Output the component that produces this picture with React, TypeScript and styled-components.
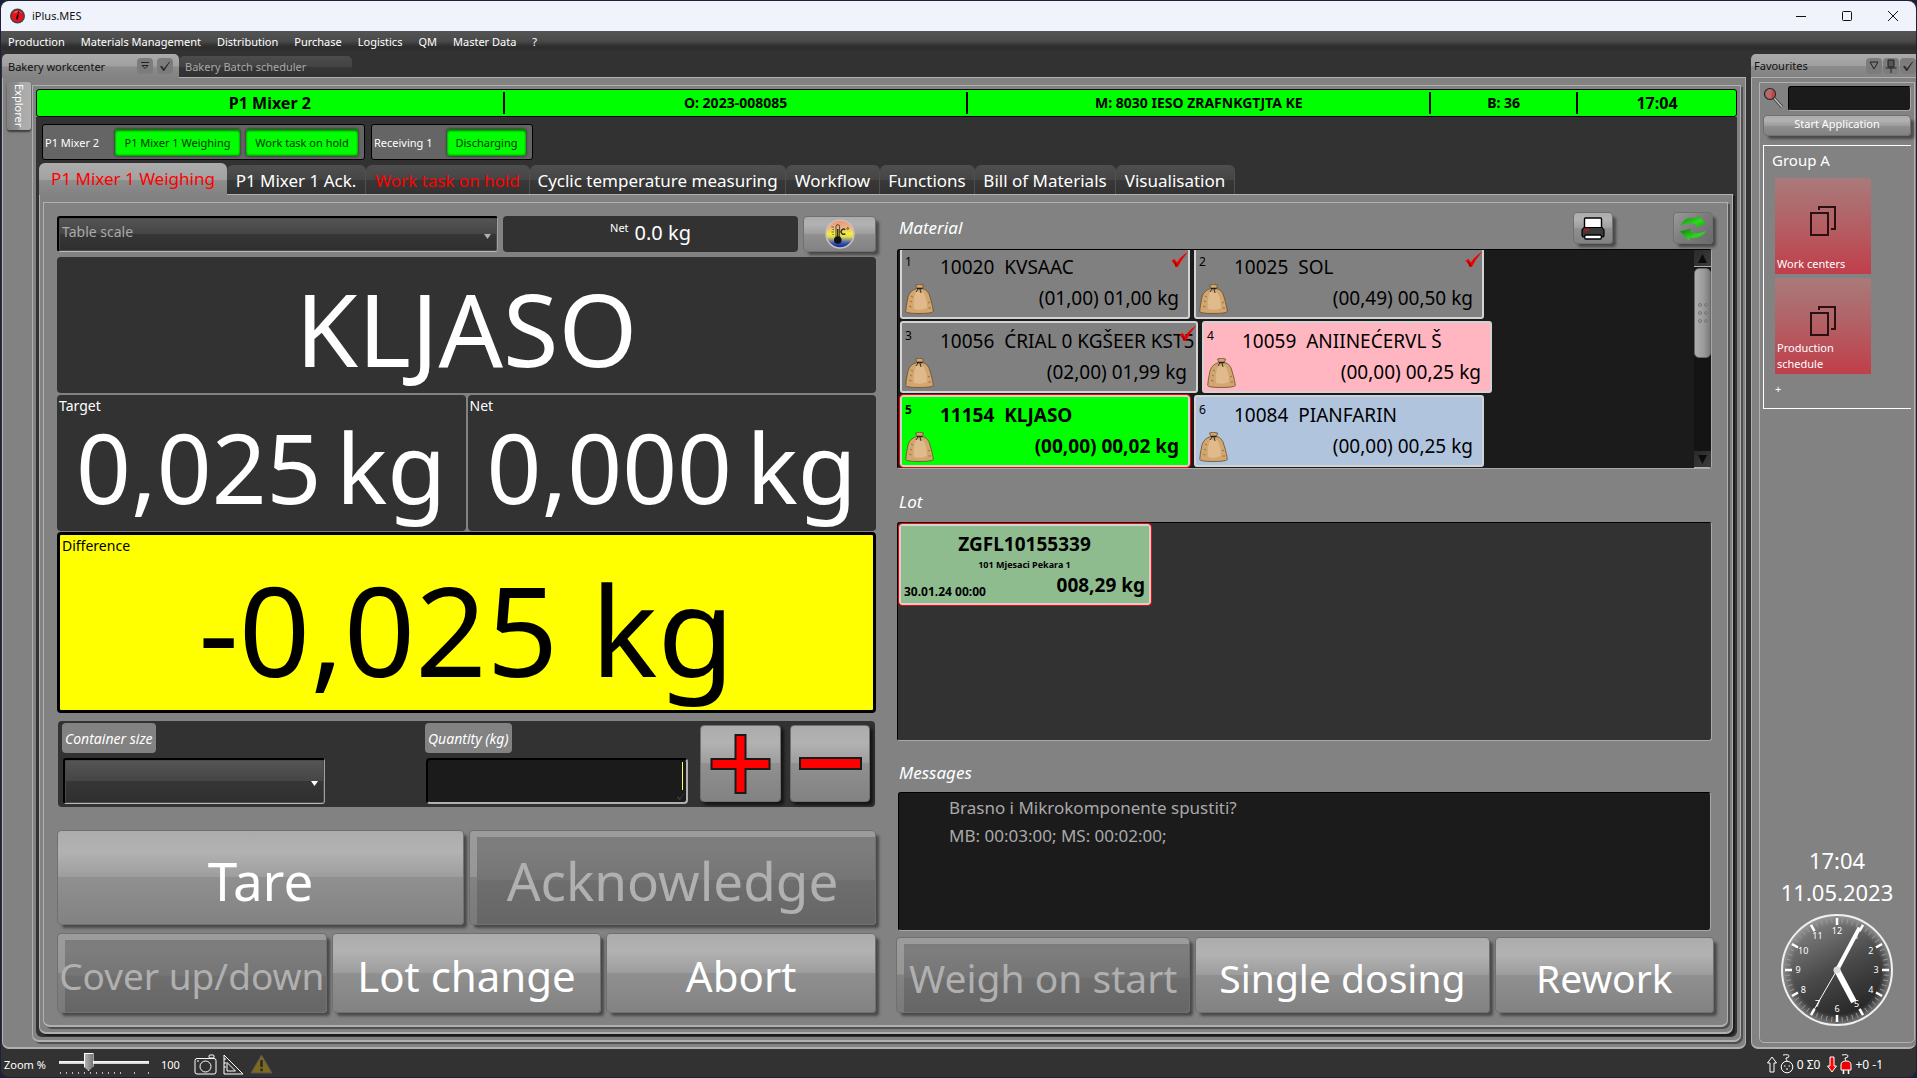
import React from "react";
import styled, { createGlobalStyle, css } from "styled-components";

const SILVER = "linear-gradient(#acacac 0%, #b2b2b2 22%, #9d9d9d 50%, #909090 50%, #828282 100%)";
const DARK_GLASS = "linear-gradient(#555555 0%, #454545 49%, #363636 50%, #2e2e2e 100%)";

const Global = createGlobalStyle`
  * { box-sizing: border-box; }
  body { margin: 0; background: #1c2138; }
  body, button, input, select {
    font-family: "Noto Sans", "Open Sans", sans-serif;
    color: #fff;
  }
  button, input, select { margin: 0; padding: 0; border: 0; border-radius: 0; }
  h2, p, ul { margin: 0; padding: 0; font-weight: 400; }
`;

/* ---------- window ---------- */

const Window = styled.div`
  display: flex;
  flex-direction: column;
  min-height: 100vh;
  padding: 1px;
  font-size: 11px;
`;

const TitleBar = styled.header`
  display: flex;
  align-items: center;
  gap: 6px;
  height: 30px;
  padding-left: 8px;
  background: #f0f3fb;
  color: #111;
  border-radius: 8px 8px 0 0;
`;

const TitleText = styled.span`
  flex: 1;
  font-size: 11px;
  line-height: 14px;
`;

const Caption = styled.div`
  display: flex;
`;

const CaptionButton = styled.button`
  display: grid;
  place-items: center;
  width: 46px;
  height: 28px;
  background: none;
`;

const MenuBar = styled.nav`
  display: flex;
  gap: 16px;
  height: 20px;
  padding: 2px 0 0 7px;
  align-items: center;
  background: linear-gradient(#545454 0%, #4a4a4a 50%, #2f2f2f 75%, #2c2c2c 90%, #323232 100%);
`;

const MenuItem = styled.button`
  background: none;
  font-size: 11px;
  line-height: 18px;
`;

const Body = styled.div`
  flex: 1;
  display: grid;
  grid-template-columns: minmax(0, 1fr) 165px;
  gap: 5px;
  padding: 3px 0 0 1px;
  background: #323232;
`;

const Column = styled.div`
  display: flex;
  flex-direction: column;
  min-width: 0;
`;

const DocTabs = styled.div`
  display: flex;
  align-items: flex-end;
  height: 23px;
`;

const DocTab = styled.div<{ $active?: boolean }>`
  display: flex;
  align-items: center;
  gap: 4px;
  width: ${(p) => (p.$active ? 177 : 173)}px;
  height: ${(p) => (p.$active ? 24 : 21)}px;
  margin-bottom: ${(p) => (p.$active ? -1 : 0)}px;
  padding: 0 6px;
  border-radius: 5px 5px 0 0;
  position: relative;
  z-index: ${(p) => (p.$active ? 1 : 0)};
  color: ${(p) => (p.$active ? "#111" : "#a9a9a9")};
  background: ${(p) =>
    p.$active
      ? "linear-gradient(#aaaaaa 0%, #a0a0a0 50%, #8c8c8c 54%, #828282 100%)"
      : "linear-gradient(#4c4c4c 0%, #434343 50%, #363636 54%, #323232 100%)"};
`;

const DocTabLabel = styled.span`
  flex: 1;
  white-space: nowrap;
`;

const TabButton = styled.button`
  display: grid;
  place-items: center;
  width: 16px;
  height: 16px;
  border-radius: 4px;
  background: #7c7c7c;
`;

const Pane = styled.section`
  flex: 1;
  display: flex;
  min-width: 0;
  border: 1px solid #b0b0b0;
  border-bottom-width: 2px;
  border-radius: 0 0 7px 7px;
  background: #828282;
`;

const Rail = styled.div`
  width: 29px;
  padding: 4px 0 0 4px;
`;

const RailTab = styled.button`
  width: 24px;
  height: 48px;
  writing-mode: vertical-rl;
  font-size: 11px;
  line-height: 18px;
  border-radius: 3px;
  background: linear-gradient(90deg, #828282 0%, #8e8e8e 45%, #a8a8a8 55%, #b0b0b0 100%);
  box-shadow: 0 2px 2px #3c3c3c;
`;

const Workcenter = styled.div`
  flex: 1;
  display: flex;
  flex-direction: column;
  min-width: 0;
  margin: 7px 4px 5px 0;
  padding: 3px;
  border: 1px solid #b0b0b0;
  border-bottom-width: 2px;
  border-radius: 0 0 7px 7px;
  box-shadow: 2px 2px 0 #505050;
`;

/* ---------- status strip ---------- */

const OrderBar = styled.div`
  display: grid;
  grid-template-columns: 468fr 464fr 463fr 147fr 158fr;
  height: 28px;
  padding: 2px 0;
  border: 1px solid #000;
  border-radius: 3px;
  background: #00ff00;
  color: #000;
`;

const OrderCell = styled.div<{ $large?: boolean }>`
  display: grid;
  place-items: center;
  min-width: 0;
  font-weight: 700;
  font-size: ${(p) => (p.$large ? 16 : 14)}px;
  line-height: 20px;
  white-space: nowrap;
  border-right: 2px solid #000;
  &:last-child { border-right: 0; }
`;

const Stage = styled.div`
  flex: 1;
  display: flex;
  flex-direction: column;
  padding: 0 4px 3px 3px;
  background: #323232;
  border-radius: 0 0 6px 6px;
`;

const Processes = styled.div`
  display: flex;
  gap: 6px;
  padding: 7px 3px 0;
  height: 46px;
`;

const Process = styled.div`
  display: flex;
  align-items: center;
  gap: 6px;
  height: 36px;
  padding: 0 6px 0 2px;
  border: 1px solid #000;
  border-radius: 3px;
  background: #656565;
`;

const ProcessName = styled.span<{ $width: number }>`
  width: ${(p) => p.$width}px;
  white-space: nowrap;
`;

const ProcessStep = styled.button<{ $width: number }>`
  width: ${(p) => p.$width}px;
  height: 27px;
  background: #00ff00;
  color: #003300;
  font-size: 11px;
  border-radius: 3px;
  box-shadow: inset 0 2px 2px #0a7a0a, inset 0 -1px 2px #0a8a0a, 0 0 2px 1px #444;
`;

const PageTabs = styled.div`
  display: flex;
  align-items: flex-end;
  height: 31px;
`;

const PageTab = styled.button<{ $active?: boolean; $alarm?: boolean; $width: number }>`
  flex: 0 1 ${(p) => p.$width}px;
  min-width: 0;
  height: ${(p) => (p.$active ? 32 : 29)}px;
  margin-bottom: ${(p) => (p.$active ? -1 : 0)}px;
  padding-top: ${(p) => (p.$active ? 0 : 2)}px;
  position: relative;
  z-index: ${(p) => (p.$active ? 1 : 0)};
  font-size: 17px;
  line-height: 24px;
  white-space: nowrap;
  color: ${(p) => (p.$alarm ? "#ff0000" : "#ffffff")};
  border-radius: 6px 6px 0 0;
  border-right: ${(p) => (p.$active ? "0" : "1px solid #505050")};
  background: ${(p) =>
    p.$active
      ? "linear-gradient(#acacac 0%, #a2a2a2 52%, #8e8e8e 54%, #828282 100%)"
      : "linear-gradient(#4f4f4f 0%, #454545 50%, #383838 52%, #323232 100%)"};
`;

const Page = styled.div`
  flex: 1;
  display: flex;
  border: 1px solid #b0b0b0;
  border-bottom-width: 2px;
  border-radius: 0 0 7px 7px;
  background: #828282;
  box-shadow: 2px 2px 0 #1c1c1c;
`;

const PageInner = styled.div`
  flex: 1;
  display: grid;
  grid-template-columns: minmax(0, 819fr) minmax(0, 818fr);
  gap: 20px;
  min-width: 0;
  margin: 7px 4px 5px 3px;
  padding: 13px 13px 12px 13px;
  border: 1px solid #b0b0b0;
  border-bottom-width: 2px;
  border-radius: 0 0 7px 7px;
  box-shadow: 2px 2px 0 #505050;
`;

/* ---------- weighing side ---------- */

const Weighing = styled.div`
  display: flex;
  flex-direction: column;
  min-width: 0;
`;

const ScaleRow = styled.div`
  display: grid;
  grid-template-columns: 441fr 295fr 73fr;
  gap: 5px;
  height: 36px;
  margin-bottom: 5px;
`;

const SelectBox = styled.div`
  position: relative;
  display: grid;
  svg {
    position: absolute;
    right: 7px;
    top: 50%;
    pointer-events: none;
  }
`;

const Select = styled.select`
  appearance: none;
  width: 100%;
  padding: 0 3px 7px;
  font-size: 14px;
  color: #a9a9a9;
  background: ${DARK_GLASS};
  border: 2px solid #000;
  border-right: 1px solid #a0a0a0;
  border-bottom: 1px solid #b8b8b8;
  border-radius: 3px;
  box-shadow: inset 0 0 0 1px #4a4a4a;
`;

const Readout = styled.div`
  display: flex;
  justify-content: center;
  gap: 6px;
  border-radius: 4px;
  background: #323232;
  font-size: 20px;
  line-height: 34px;
  small {
    font-size: 11px;
    line-height: 24px;
  }
`;

const glossy = css`
  background: ${SILVER};
  border: 1px solid #707070;
  border-radius: 4px;
  box-shadow: 4px 4px 3px -1px #484848;
`;

const IconButton = styled.button<{ $off?: boolean }>`
  display: grid;
  place-items: center;
  ${glossy}
  ${(p) => p.$off && "background: linear-gradient(135deg, #999 0%, #7c7c7c 50%, #6a6a6a 100%);"}
`;

const Names = styled.div`
  flex: 136 1 0;
  display: grid;
  place-items: end center;
  margin-bottom: 2px;
  border-radius: 4px;
  background: #323232;
  font-size: 101px;
  line-height: 130px;
`;

const Pair = styled.div`
  flex: 137 1 0;
  display: grid;
  grid-template-columns: 1fr 1fr;
  gap: 2px;
  margin-bottom: 1px;
`;

const Measure = styled.div`
  display: flex;
  flex-direction: column;
  padding: 0 2px;
  border-radius: 4px;
  background: #323232;
`;

const MeasureLabel = styled.span`
  font-size: 14px;
  line-height: 22px;
`;

const MeasureValue = styled.output`
  align-self: center;
  font-size: 96px;
  line-height: 100px;
  white-space: nowrap;
`;

const ThinSpace = styled.span`
  font-size: 56px;
  line-height: 1;
`;

const Difference = styled(Measure)`
  flex: 175 1 0;
  border: 3px solid #000;
  background: #ffff00;
  color: #000;
  padding: 0 2px;
  ${MeasureValue} {
    font-size: 125px;
    line-height: 144px;
  }
`;

const Container = styled.div`
  display: grid;
  grid-template-columns: 363fr 266fr 90fr 89fr;
  height: 86px;
  margin: 8px 1px 23px;
  padding: 2px 5px 3px 4px;
  border-radius: 4px;
  background: #323232;
`;

const Field = styled.div`
  display: flex;
  flex-direction: column;
  align-items: flex-start;
  gap: 5px;
`;

const FieldLabel = styled.label`
  height: 30px;
  padding: 0 3px;
  font-size: 14px;
  font-style: italic;
  line-height: 32px;
  border-radius: 4px;
  background: #828282;
`;

const FieldSelect = styled.div`
  width: 262px;
  height: 46px;
  display: grid;
  margin-left: 1px;
`;

const QuantityInput = styled.input`
  width: 262px;
  height: 46px;
  margin-left: 1px;
  padding: 0 12px;
  font-size: 20px;
  text-align: right;
  background: linear-gradient(#ffff66, #ffff66) right 3px top 2px / 1px 28px no-repeat, #1b1b1b;
  border: 2px solid #000;
  border-right-color: #b0b0b0;
  border-bottom-color: #b0b0b0;
  border-radius: 4px;
`;

const QuantityBox = styled.div`
  position: relative;
  svg {
    position: absolute;
    right: 3px;
    bottom: 3px;
  }
`;

const StepButton = styled.button`
  display: grid;
  place-items: center;
  margin: 2px 0 2px 9px;
  ${glossy}
  box-shadow: 3px 3px 3px #151515;
`;

const Actions = styled.div<{ $columns: string; $height: number; $gapTop?: number }>`
  display: grid;
  grid-template-columns: ${(p) => p.$columns};
  gap: 5px;
  height: ${(p) => p.$height}px;
  margin-top: ${(p) => p.$gapTop ?? 0}px;
`;

const ActionButton = styled.button<{ $size: number }>`
  min-width: 0;
  padding-top: 6px;
  font-size: ${(p) => p.$size}px;
  line-height: 64px;
  white-space: nowrap;
  display: flex;
  align-items: center;
  justify-content: center;
  ${glossy}
  &:disabled {
    color: #b0b0b0;
    background:
      linear-gradient(#7c7c7c 0%, #7e7e7e 10%, #757575 49%, #6e6e6e 50%, #666666 100%) right bottom / calc(100% - 7px) calc(100% - 6px) no-repeat,
      linear-gradient(#9c9c9c 0%, #969696 49%, #828282 50%, #7a7a7a 100%);
  }
`;

/* ---------- material side ---------- */

const Materials = styled.div`
  display: flex;
  flex-direction: column;
  min-width: 0;
`;

const SectionHead = styled.div`
  display: flex;
  align-items: center;
  gap: 60px;
  height: 53px;
  padding: 12px 1px 0 3px;
`;

const ListHead = styled(SectionHead)`
  height: 33px;
  padding-top: 0;
  align-items: flex-start;
`;

const MessageHead = styled(SectionHead)`
  height: 51px;
`;

const SectionTitle = styled.h2`
  flex: 1;
  font-size: 17px;
  font-style: italic;
  line-height: 24px;
`;

const HeadButton = styled(IconButton)`
  width: 40px;
  height: 32px;
  margin-top: -4px;
`;

const sunken = css`
  border: 1px solid #000;
  border-right-color: #a8a8a8;
  border-bottom-color: #a8a8a8;
  border-radius: 3px;
`;

const MaterialList = styled.div`
  display: flex;
  flex: 0 0 220px;
  margin: 0 2px 0 1px;
  background: #1b1b1b;
  overflow: hidden;
  ${sunken}
`;

const Cards = styled.div`
  flex: 1;
  display: flex;
  flex-direction: column;
  justify-content: flex-end;
  gap: 2px;
  min-width: 0;
  padding: 0 2px 1px;
`;

const CardRow = styled.div`
  display: flex;
  gap: 4px;
`;

const Card = styled.button<{ $tone: string; $selected?: boolean; $wide?: boolean }>`
  position: relative;
  display: flex;
  flex-direction: column;
  width: ${(p) => (p.$wide ? 298 : 290)}px;
  height: 72px;
  padding: 5px 9px 0 38px;
  border: 2px solid #d3d3d3;
  border-radius: 3px;
  background: ${(p) => p.$tone};
  color: #000;
  font-size: 19px;
  line-height: 26px;
  text-align: left;
  font-weight: ${(p) => (p.$selected ? 700 : 400)};
  outline: ${(p) => (p.$selected ? "1px solid #ff0000" : "none")};
  white-space: pre;
`;

const CardNumber = styled.span`
  position: absolute;
  left: 3px;
  top: 5px;
  font-size: 12px;
  line-height: 16px;
`;

const CardBag = styled.span`
  position: absolute;
  left: 3px;
  bottom: 3px;
  height: 30px;
`;

const CardCheck = styled.span`
  position: absolute;
  right: -1px;
  top: 2px;
  height: 16px;
  line-height: 0;
`;

const CardQuantity = styled.span`
  align-self: flex-end;
  margin-top: 5px;
`;

const ScrollTrack = styled.div`
  display: flex;
  flex-direction: column;
  width: 17px;
  background: #141414;
`;

const ScrollArrow = styled.button`
  display: grid;
  place-items: center;
  height: 17px;
  background: linear-gradient(135deg, #2a2a2a, #3c3c3c);
  border-bottom: 1px solid #b0b0b0;
`;

const ScrollThumb = styled.div`
  display: grid;
  place-items: center;
  height: 90px;
  margin: 1px 0 auto;
  border-radius: 5px;
  border: 1px solid #666;
  background: linear-gradient(90deg, #aeaeae, #9a9a9a 60%, #7a7a7a);
`;

const LotList = styled.div`
  flex: 216 1 0;
  margin: 0 2px 0 1px;
  background: #323232;
  padding: 1px;
  ${sunken}
`;

const LotCard = styled.button`
  display: grid;
  grid-template-columns: auto auto;
  align-content: start;
  justify-content: space-between;
  width: 252px;
  height: 81px;
  padding: 5px 4px 0 3px;
  border: 2px solid #d3d3d3;
  border-radius: 3px;
  outline: 1px solid #ff0000;
  background: #8fbc8f;
  color: #000;
  font-weight: 700;
`;

const LotCode = styled.span`
  grid-column: 1 / -1;
  font-size: 19px;
  line-height: 26px;
`;

const LotPlace = styled.span`
  grid-column: 1 / -1;
  font-size: 9px;
  line-height: 16px;
`;

const LotDate = styled.span`
  font-size: 12px;
  line-height: 10px;
  align-self: end;
`;

const LotQuantity = styled.span`
  font-size: 19px;
  line-height: 24px;
`;

const MessageList = styled.ul`
  flex: 136 1 0;
  margin: 0 3px 6px 2px;
  padding: 1px 0 0 50px;
  list-style: none;
  background: #1b1b1b;
  color: #a9a9a9;
  font-size: 17px;
  line-height: 28px;
  ${sunken}
`;

/* ---------- favourites ---------- */

const FavTab = styled.div`
  display: flex;
  align-items: center;
  gap: 1px;
  height: 23px;
  padding: 0 0 0 3px;
  border-radius: 5px 0 0 0;
  color: #111;
  background: linear-gradient(#aaaaaa 0%, #a0a0a0 50%, #8c8c8c 54%, #828282 100%);
`;

const FavPane = styled(Pane)`
  border-right: 0;
`;

const FavInner = styled.aside`
  flex: 1;
  display: flex;
  flex-direction: column;
  min-width: 0;
  margin: 4px 1px 4px 7px;
  padding: 3px;
  border: 1px solid #b0b0b0;
  border-radius: 0 0 5px 5px;
`;

const SearchRow = styled.label`
  display: flex;
  gap: 4px;
  height: 25px;
  margin-bottom: 4px;
`;

const SearchInput = styled.input`
  flex: 1;
  min-width: 0;
  background: #1b1b1b;
  ${sunken}
`;

const StartButton = styled.button`
  height: 21px;
  font-size: 11px;
  line-height: 14px;
  padding-bottom: 3px;
  ${glossy}
`;

const Group = styled.div`
  display: flex;
  flex-direction: column;
  align-items: flex-start;
  gap: 4px;
  height: 264px;
  margin-top: 9px;
  padding: 2px 0 0 11px;
  border: 1px solid #fff;
  border-right: 0;
`;

const GroupTitle = styled.h2`
  height: 26px;
  margin-left: -3px;
  font-size: 15px;
  line-height: 24px;
`;

const Tile = styled.button`
  display: flex;
  flex-direction: column;
  justify-content: flex-end;
  width: 96px;
  height: 96px;
  padding: 0 2px 2px;
  text-align: left;
  font-size: 11px;
  line-height: 16px;
  background: linear-gradient(#a97a7a, #b35f64 50%, #c13e4a);
  position: relative;
  svg {
    position: absolute;
    left: 34px;
    top: 27px;
  }
`;

const AddButton = styled.button`
  background: none;
  font-size: 11px;
  line-height: 22px;
  padding: 0;
`;

const Clock = styled.div`
  display: flex;
  flex-direction: column;
  align-items: center;
  margin-top: auto;
  padding-bottom: 11px;
  font-size: 22px;
  line-height: 32px;
  svg { margin-top: 4px; }
`;

/* ---------- footer ---------- */

const Footer = styled.footer`
  display: flex;
  align-items: center;
  height: 28px;
  padding: 2px 33px 0 3px;
  background: #323232;
  border-radius: 0 0 8px 8px;
`;

const ZoomLabel = styled.label`
  width: 55px;
`;

const ZoomTrack = styled.div`
  display: flex;
  flex-direction: column;
  width: 90px;
  height: 22px;
`;

const Range = styled.input`
  appearance: none;
  width: 90px;
  height: 18px;
  background: linear-gradient(#fff, #ccc) center / 100% 3px no-repeat;
  &::-webkit-slider-thumb {
    appearance: none;
    width: 10px;
    height: 18px;
    border: 1px solid #fff;
    background: linear-gradient(90deg, #b0b0b0, #777);
    clip-path: polygon(0 0, 100% 0, 100% 75%, 50% 100%, 0 75%);
  }
`;

const ZoomValue = styled.output`
  width: 33px;
  margin-left: 12px;
`;

const FooterIcons = styled.div`
  display: flex;
  flex: 1;
  gap: 6px;
`;

const Links = styled.div`
  display: flex;
  align-items: center;
  gap: 3px;
  font-size: 12px;
  & > svg:nth-of-type(3) { margin-left: 4px; }
`;

/* ---------- drawings ---------- */

const Logo = () => (
  <svg width="17" height="16" viewBox="0 0 17 16">
    <circle cx="8.5" cy="8" r="7.5" fill="#444" />
    <circle cx="8.5" cy="8" r="6" fill="#e8121c" />
    <path d="M4 5 Q8.500 1 13 5 Q8.500 3.500 4 5" fill="#ff8080" />
    <path d="M9 6.500 L7.800 11.500" stroke="#200" strokeWidth="1.800" />
    <circle cx="9.500" cy="4.400" r="1.100" fill="#200" />
  </svg>
);

const Check = ({ size = 12, color = "#2e2e2e" }: { size?: number; color?: string }) => (
  <svg width={size} height={size} viewBox="0 0 12 12">
    <path d="M1 6.500 L3 5.800 L4.800 8.500 L10.500 1.500 L11 2 L5.200 11 L4.300 11 Z" fill={color} />
  </svg>
);

const RedCheck = () => (
  <svg width="18" height="18" viewBox="0 0 18 18">
    <path d="M0.500 9.500 L3.500 8 Q5 9.500 5.800 11.500 Q10 5 17.500 0.500 Q11 7.500 6.800 16 L4.500 16 Q3.500 12.500 0.500 9.500 Z" fill="#f00000" />
    <path d="M4.500 15.500 Q4 12.500 2 10.500 Q5 11 6.500 14 Z" fill="#900" />
  </svg>
);

const Bag = () => (
  <svg width="29" height="30" viewBox="0 0 29 30">
    <path d="M10.500 1 Q14.500 -0.500 18.500 1 L17.500 4.500 Q23.500 6 25 13 Q28 23 28.300 27.500 Q27 29.500 14 29.500 Q1.500 29.500 0.700 27.500 Q1 22 3 13 Q5 6 12 4.500 Z" fill="#d2a66f" stroke="#6b4c2a" strokeWidth="0.800" />
    <path d="M11 8 Q8 15 9 25 Q16 27 22 24 Q22 14 18 8 Z" fill="#e3bf92" opacity="0.800" />
    <path d="M12 4.500 H17.500" stroke="#222" strokeWidth="1.500" />
    <path d="M13 5 L11 8 M15 5 L16 9" stroke="#222" strokeWidth="0.900" fill="none" />
    <path d="M5 17 L7 18 M4 22 L6.500 23 M25 18 L23 19 M26 24 L23.500 24 M6 12 L8 13" stroke="#8a6236" strokeWidth="0.800" />
  </svg>
);

const Thermometer = () => (
  <svg width="30" height="30" viewBox="0 0 30 30">
    <defs>
      <linearGradient id="thermo" x1="0" y1="0" x2="0" y2="1">
        <stop offset="0" stopColor="#f2907c" />
        <stop offset="0.250" stopColor="#f0b080" />
        <stop offset="0.480" stopColor="#f4ee3c" />
        <stop offset="0.600" stopColor="#e0dc50" />
        <stop offset="0.820" stopColor="#3a55b8" />
        <stop offset="1" stopColor="#0b2394" />
      </linearGradient>
    </defs>
    <circle cx="15" cy="15" r="14" fill="url(#thermo)" stroke="#c9c0b4" strokeWidth="1.500" />
    <path d="M11 18 V7.500 a1.800 1.800 0 0 1 3.600 0 V18" fill="none" stroke="#333" strokeWidth="0.900" />
    <path d="M12.800 10 V20" stroke="#111" strokeWidth="1.300" />
    <circle cx="12.800" cy="21" r="3.800" fill="#111" />
    <path d="M6.500 8 H9 M7.500 10.500 H9 M6.500 13 H9 M7.500 15.500 H9" stroke="#555" strokeWidth="0.900" />
    <path d="M20.300 10.800 a2.500 2.500 0 1 0 0 3.800" fill="none" stroke="#333" strokeWidth="1.500" />
    <circle cx="22.700" cy="9.500" r="0.900" fill="none" stroke="#333" strokeWidth="0.700" />
  </svg>
);

const Printer = () => (
  <svg width="24" height="23" viewBox="0 0 24 23">
    <rect x="3.500" y="1" width="17" height="11" rx="1" fill="#fff" stroke="#000" strokeWidth="1.400" />
    <path d="M3 10.500 H21 L23 13 V18 Q23 20 21 20 H3 Q1 20 1 18 V13 Z" fill="#3a3a3a" stroke="#000" strokeWidth="1.200" />
    <path d="M3 13 H8" stroke="#d01010" strokeWidth="1.800" />
    <rect x="3.800" y="18" width="16.500" height="4" rx="1" fill="#fff" stroke="#000" strokeWidth="1.300" />
  </svg>
);

const Refresh = () => (
  <svg width="28" height="26" viewBox="0 0 28 26">
    <defs>
      <linearGradient id="arrows" x1="0" y1="0" x2="1" y2="1">
        <stop offset="0" stopColor="#0c7a0c" />
        <stop offset="0.600" stopColor="#2ed81e" />
        <stop offset="1" stopColor="#12a012" />
      </linearGradient>
    </defs>
    <path d="M1 11 Q6 0.500 18 3.500 L18.500 0 L27 8.500 L16.500 13 L17 9.500 Q9 6.500 1 11 Z" fill="url(#arrows)" />
    <path d="M27 16 Q22 25 10.500 22.500 L10 26 L1 16.500 L12 13.500 L11.300 17 Q18 20 27 16 Z" fill="url(#arrows)" />
  </svg>
);

const Windows = () => (
  <svg width="28" height="32" viewBox="0 0 28 32">
    <path d="M2 8 H19 V30 H2 Z M10 5 V2 H26 V24 H22" fill="none" stroke="#2a1012" strokeWidth="2" />
  </svg>
);

const Magnifier = () => (
  <svg width="21" height="22" viewBox="0 0 21 22">
    <path d="M11 12 L19 21" stroke="#333" strokeWidth="3" />
    <path d="M11 12 L19 21" stroke="#bbb" strokeWidth="1.500" />
    <circle cx="7" cy="8" r="5.500" fill="#b26a6a" stroke="#222" strokeWidth="1.200" />
    <path d="M9 4 a5 5 0 0 1 -1 9 Z" fill="#d22" opacity="0.600" />
  </svg>
);

const DropArrow = ({ color = "#ffffff" }: { color?: string }) => (
  <svg width="7" height="5" viewBox="0 0 7 5">
    <path d="M0 0 H7 L3.500 5 Z" fill={color} />
  </svg>
);

const Plus = () => (
  <svg width="61" height="62" viewBox="0 0 61 62">
    <path d="M25.500 2 H35.500 V26 H59.500 V36 H35.500 V60 H25.500 V36 H1.500 V26 H25.500 Z" fill="#ff0000" stroke="#1a1a1a" strokeWidth="2" />
  </svg>
);

const Minus = () => (
  <svg width="63" height="13" viewBox="0 0 63 13">
    <rect x="1" y="1" width="61" height="11" fill="#ff0000" stroke="#1a1a1a" strokeWidth="2" />
  </svg>
);

const polar = (angle: number, radius: number): [number, number] => {
  const a = ((angle - 90) * Math.PI) / 180;
  return [58 + radius * Math.cos(a), 58 + radius * Math.sin(a)];
};

const Hand = ({ angle, from, to, width }: { angle: number; from: number; to: number; width: number }) => {
  const [x1, y1] = polar(angle, from);
  const [x2, y2] = polar(angle, to);
  return <line x1={x1} y1={y1} x2={x2} y2={y2} stroke="#fff" strokeWidth={width} />;
};

const ClockFace = () => (
  <svg width="116" height="116" viewBox="0 0 116 116">
    <defs>
      <linearGradient id="face" x1="0.200" y1="0" x2="0.700" y2="1">
        <stop offset="0" stopColor="#8a8a8a" />
        <stop offset="0.500" stopColor="#4a4a4a" />
        <stop offset="1" stopColor="#1e1e1e" />
      </linearGradient>
      <radialGradient id="rim">
        <stop offset="0.800" stopColor="#888" stopOpacity="0" />
        <stop offset="1" stopColor="#aaa" stopOpacity="0.700" />
      </radialGradient>
    </defs>
    <circle cx="58" cy="58" r="55" fill="url(#face)" />
    <circle cx="58" cy="58" r="55" fill="url(#rim)" stroke="#f0f0f0" strokeWidth="2" />
    {Array.from({ length: 60 }, (_, i) => {
      const major = i % 5 === 0;
      const [x1, y1] = polar(i * 6, major ? 45 : 47);
      const [x2, y2] = polar(i * 6, 52);
      return <line key={i} x1={x1} y1={y1} x2={x2} y2={y2} stroke={major ? "#fff" : "#999"} strokeWidth={major ? 2.5 : 1} />;
    })}
    {Array.from({ length: 12 }, (_, i) => {
      const [x, y] = polar((i + 1) * 30, 39);
      return (
        <text key={i} x={x} y={y + 3} fill="#fff" fontSize="9" textAnchor="middle">
          {i + 1}
        </text>
      );
    })}
    <Hand angle={152} from={0} to={36} width={6} />
    <Hand angle={28} from={0} to={48} width={4} />
    <Hand angle={210} from={-4} to={46} width={1} />
    <circle cx="58" cy="58" r="3.500" fill="#ddd" />
  </svg>
);

const Camera = () => (
  <svg width="23" height="21" viewBox="0 0 23 21" fill="none" stroke="#fff">
    <rect x="1" y="4.500" width="21" height="15.500" rx="2" />
    <circle cx="11.500" cy="12.500" r="5.500" />
    <path d="M3 7 H5" />
    <rect x="15" y="1" width="5" height="3" rx="1" />
  </svg>
);

const SetSquare = () => (
  <svg width="21" height="21" viewBox="0 0 21 21" fill="none" stroke="#fff">
    <path d="M1 1 V20 H20 Z M4 8.500 V17 H12.500 Z" />
    <path d="M1 5 H3 M1 9 H3 M1 13 H3" />
  </svg>
);

const Warning = () => (
  <svg width="23" height="20" viewBox="0 0 23 20">
    <path d="M11.500 1 L22 19 H1 Z" fill="#7d6a20" stroke="#555" />
    <path d="M11.500 6 V13" stroke="#2a2a2a" strokeWidth="2.500" />
    <circle cx="11.500" cy="16" r="1.400" fill="#2a2a2a" />
  </svg>
);

const LinkArrow = ({ down }: { down?: boolean }) => (
  <svg width="10" height="17" viewBox="0 0 10 17">
    <path
      d={down ? "M3 1 H7 V10 H9.500 L5 16 L0.500 10 H3 Z" : "M3 16 H7 V7 H9.500 L5 1 L0.500 7 H3 Z"}
      fill={down ? "#ff0000" : "none"}
      stroke="#fff"
      strokeWidth="1"
    />
  </svg>
);

const Socket = ({ red }: { red?: boolean }) =>
  red ? (
    <svg width="12" height="20" viewBox="0 0 12 20">
      <path d="M1 16 V11 Q1 7 6 7 Q11 7 11 11 V16 Z" fill="#e00" stroke="#fff" />
      <path d="M3.500 16 V20 M8.500 16 V20" stroke="#fff" strokeWidth="1.500" />
      <path d="M2 1 Q8 0 8 2 Q8 4 5 4 Q5 5 6 7" fill="none" stroke="#fff" />
    </svg>
  ) : (
    <svg width="14" height="20" viewBox="0 0 14 20">
      <circle cx="7" cy="13" r="5.800" fill="none" stroke="#fff" />
      <path d="M4 12 H5.500 M8.500 12 H10 M6 15 H8" stroke="#fff" />
      <path d="M3 1 Q9 0 9 2 Q9 4 6 4 Q6 5 7 7" fill="none" stroke="#fff" />
    </svg>
  );

/* ---------- data ---------- */

const MENU = ["Production", "Materials Management", "Distribution", "Purchase", "Logistics", "QM", "Master Data", "?"];

const PAGE_TABS = [
  { label: "P1 Mixer 1 Weighing", width: 188, active: true, alarm: true },
  { label: "P1 Mixer 1 Ack.", width: 139 },
  { label: "Work task on hold", width: 164, alarm: true },
  { label: "Cyclic temperature measuring", width: 256 },
  { label: "Workflow", width: 94 },
  { label: "Functions", width: 95 },
  { label: "Bill of Materials", width: 141 },
  { label: "Visualisation", width: 119 },
];

const MATERIALS = [
  [
    { no: 1, name: "10020  KVSAAC", qty: "(01,00) 01,00 kg", tone: "#808080", done: true },
    { no: 2, name: "10025  SOL", qty: "(00,49) 00,50 kg", tone: "#808080", done: true },
  ],
  [
    { no: 3, name: "10056  ĆRIAL 0 KGŠEER KST5", qty: "(02,00) 01,99 kg", tone: "#808080", done: true, wide: true },
    { no: 4, name: "10059  ANIINEĆERVL Š", qty: "(00,00) 00,25 kg", tone: "#ffb6c1" },
  ],
  [
    { no: 5, name: "11154  KLJASO", qty: "(00,00) 00,02 kg", tone: "#00ff00", selected: true },
    { no: 6, name: "10084  PIANFARIN", qty: "(00,00) 00,25 kg", tone: "#b0c4de" },
  ],
] as { no: number; name: string; qty: string; tone: string; done?: boolean; wide?: boolean; selected?: boolean }[][];

const TICKS = [1, 7, 13, 19, 25, 31, 37, 43, 49, 55, 61, 75, 89];

export default function App() {
  return (
    <Window>
      <Global />
      <TitleBar>
        <Logo />
        <TitleText>iPlus.MES</TitleText>
        <Caption>
          <CaptionButton aria-label="Minimise">
            <svg width="10" height="10" stroke="#111"><path d="M0 5.500 H10" /></svg>
          </CaptionButton>
          <CaptionButton aria-label="Maximise">
            <svg width="10" height="10" stroke="#111" fill="none"><rect x="0.500" y="0.500" width="9" height="9" rx="1" /></svg>
          </CaptionButton>
          <CaptionButton aria-label="Close">
            <svg width="10" height="10" stroke="#111"><path d="M0 0 L10 10 M10 0 L0 10" /></svg>
          </CaptionButton>
        </Caption>
      </TitleBar>
      <MenuBar>
        {MENU.map((item) => (
          <MenuItem key={item}>{item}</MenuItem>
        ))}
      </MenuBar>

      <Body>
        <Column>
          <DocTabs>
            <DocTab $active>
              <DocTabLabel>Bakery workcenter</DocTabLabel>
              <TabButton aria-label="Tab list">
                <svg width="8" height="8" fill="none" stroke="#222"><path d="M0 0.500 H8 M1 3.500 H7 L4 6.500 Z" /></svg>
              </TabButton>
              <TabButton aria-label="Close tab"><Check /></TabButton>
            </DocTab>
            <DocTab><DocTabLabel>Bakery Batch scheduler</DocTabLabel></DocTab>
          </DocTabs>
          <Pane>
            <Rail><RailTab>Explorer</RailTab></Rail>
            <Workcenter>
              <OrderBar>
                <OrderCell $large>P1 Mixer 2</OrderCell>
                <OrderCell>O: 2023-008085</OrderCell>
                <OrderCell>M: 8030 IESO ZRAFNKGTJTA KE</OrderCell>
                <OrderCell>B: 36</OrderCell>
                <OrderCell $large>17:04</OrderCell>
              </OrderBar>
              <Stage>
                <Processes>
                  <Process>
                    <ProcessName $width={64}>P1 Mixer 2</ProcessName>
                    <ProcessStep $width={125}>P1 Mixer 1 Weighing</ProcessStep>
                    <ProcessStep $width={112}>Work task on hold</ProcessStep>
                  </Process>
                  <Process>
                    <ProcessName $width={67}>Receiving 1</ProcessName>
                    <ProcessStep $width={79}>Discharging</ProcessStep>
                  </Process>
                </Processes>
                <PageTabs>
                  {PAGE_TABS.map((t) => (
                    <PageTab key={t.label} $active={t.active} $alarm={t.alarm} $width={t.width}>
                      {t.label}
                    </PageTab>
                  ))}
                </PageTabs>
                <Page>
                  <PageInner>
                    <Weighing>
                      <ScaleRow>
                        <SelectBox>
                          <Select aria-label="Scale"><option>Table scale</option></Select>
                          <DropArrow color="#b0b0b0" />
                        </SelectBox>
                        <Readout><small>Net</small><span>0.0 kg</span></Readout>
                        <IconButton aria-label="Temperature"><Thermometer /></IconButton>
                      </ScaleRow>
                      <Names>KLJASO</Names>
                      <Pair>
                        <Measure>
                          <MeasureLabel>Target</MeasureLabel>
                          <MeasureValue>0,025<ThinSpace> </ThinSpace>kg</MeasureValue>
                        </Measure>
                        <Measure>
                          <MeasureLabel>Net</MeasureLabel>
                          <MeasureValue>0,000<ThinSpace> </ThinSpace>kg</MeasureValue>
                        </Measure>
                      </Pair>
                      <Difference>
                        <MeasureLabel>Difference</MeasureLabel>
                        <MeasureValue>-0,025 kg</MeasureValue>
                      </Difference>
                      <Container>
                        <Field>
                          <FieldLabel htmlFor="container">Container size</FieldLabel>
                          <FieldSelect>
                            <SelectBox>
                              <Select id="container"><option></option></Select>
                              <DropArrow />
                            </SelectBox>
                          </FieldSelect>
                        </Field>
                        <Field>
                          <FieldLabel htmlFor="quantity">Quantity (kg)</FieldLabel>
                          <QuantityBox>
                            <QuantityInput id="quantity" />
                            <Check size={9} color="#3c3c3c" />
                          </QuantityBox>
                        </Field>
                        <StepButton aria-label="Increase"><Plus /></StepButton>
                        <StepButton aria-label="Decrease"><Minus /></StepButton>
                      </Container>
                      <Actions $columns="1fr 1fr" $height={95}>
                        <ActionButton $size={53}>Tare</ActionButton>
                        <ActionButton $size={53} disabled>Acknowledge</ActionButton>
                      </Actions>
                      <Actions $columns="1fr 1fr 1fr" $height={80} $gapTop={8}>
                        <ActionButton $size={37} disabled>Cover up/down</ActionButton>
                        <ActionButton $size={42}>Lot change</ActionButton>
                        <ActionButton $size={42}>Abort</ActionButton>
                      </Actions>
                    </Weighing>

                    <Materials>
                      <ListHead>
                        <SectionTitle>Material</SectionTitle>
                        <HeadButton aria-label="Print"><Printer /></HeadButton>
                        <HeadButton aria-label="Refresh" $off><Refresh /></HeadButton>
                      </ListHead>
                      <MaterialList>
                        <Cards>
                          {MATERIALS.map((row, i) => (
                            <CardRow key={i}>
                              {row.map((m) => (
                                <Card key={m.no} $tone={m.tone} $selected={m.selected} $wide={m.wide}>
                                  <CardNumber>{m.no}</CardNumber>
                                  <CardBag><Bag /></CardBag>
                                  <span>{m.name}</span>
                                  <CardQuantity>{m.qty}</CardQuantity>
                                  {m.done && <CardCheck><RedCheck /></CardCheck>}
                                </Card>
                              ))}
                            </CardRow>
                          ))}
                        </Cards>
                        <ScrollTrack>
                          <ScrollArrow aria-label="Scroll up">
                            <svg width="9" height="9"><path d="M4.500 0 L9 9 H0 Z" fill="#0c0c0c" /></svg>
                          </ScrollArrow>
                          <ScrollThumb>
                            <svg width="10" height="20" fill="none" stroke="#777">
                              {[2, 10, 18].map((y) => (
                                <g key={y}><circle cx="2" cy={y} r="1.500" /><circle cx="8" cy={y} r="1.500" /></g>
                              ))}
                            </svg>
                          </ScrollThumb>
                          <ScrollArrow aria-label="Scroll down">
                            <svg width="9" height="9"><path d="M0 0 H9 L4.500 9 Z" fill="#0c0c0c" /></svg>
                          </ScrollArrow>
                        </ScrollTrack>
                      </MaterialList>
                      <SectionHead><SectionTitle>Lot</SectionTitle></SectionHead>
                      <LotList>
                        <LotCard>
                          <LotCode>ZGFL10155339</LotCode>
                          <LotPlace>101 Mjesaci Pekara 1</LotPlace>
                          <LotDate>30.01.24 00:00</LotDate>
                          <LotQuantity>008,29 kg</LotQuantity>
                        </LotCard>
                      </LotList>
                      <MessageHead><SectionTitle>Messages</SectionTitle></MessageHead>
                      <MessageList>
                        <li>Brasno i Mikrokomponente spustiti?</li>
                        <li>MB: 00:03:00; MS: 00:02:00;</li>
                      </MessageList>
                      <Actions $columns="295fr 295fr 220fr" $height={76}>
                        <ActionButton $size={39} disabled>Weigh on start</ActionButton>
                        <ActionButton $size={39}>Single dosing</ActionButton>
                        <ActionButton $size={39}>Rework</ActionButton>
                      </Actions>
                    </Materials>
                  </PageInner>
                </Page>
              </Stage>
            </Workcenter>
          </Pane>
        </Column>

        <Column>
          <FavTab>
            <DocTabLabel>Favourites</DocTabLabel>
            <TabButton aria-label="Options">
              <svg width="10" height="9" fill="none" stroke="#222"><path d="M1 1 H9 L5 8 Z" /></svg>
            </TabButton>
            <TabButton aria-label="Pin">
              <svg width="12" height="14" stroke="#222" fill="#555"><path d="M3 1 H9 V8 H3 Z M0.500 9 H11.500 M6 9 V14" /></svg>
            </TabButton>
            <TabButton aria-label="Close favourites"><Check /></TabButton>
          </FavTab>
          <FavPane>
            <FavInner>
              <SearchRow>
                <Magnifier />
                <SearchInput aria-label="Search" />
              </SearchRow>
              <StartButton>Start Application</StartButton>
              <Group>
                <GroupTitle>Group A</GroupTitle>
                <Tile><Windows />Work centers</Tile>
                <Tile><Windows />Production schedule</Tile>
                <AddButton>+</AddButton>
              </Group>
              <Clock>
                <span>17:04</span>
                <span>11.05.2023</span>
                <ClockFace />
              </Clock>
            </FavInner>
          </FavPane>
        </Column>
      </Body>

      <Footer>
        <ZoomLabel htmlFor="zoom">Zoom %</ZoomLabel>
        <ZoomTrack>
          <Range id="zoom" type="range" min={0} max={300} defaultValue={92} />
          <svg width="90" height="3" fill="#bbb">
            {TICKS.map((x) => <rect key={x} x={x} y="1" width="1" height="2" />)}
          </svg>
        </ZoomTrack>
        <ZoomValue>100</ZoomValue>
        <FooterIcons><Camera /><SetSquare /><Warning /></FooterIcons>
        <Links>
          <LinkArrow /><Socket /><span>0 Σ0</span>
          <LinkArrow down /><Socket red /><span>+0 -1</span>
        </Links>
      </Footer>
    </Window>
  );
}
